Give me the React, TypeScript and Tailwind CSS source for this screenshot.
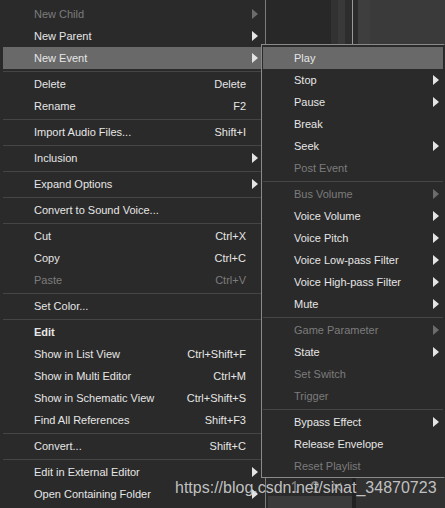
import React from "react";

type Item = {
  label: string;
  shortcut?: string;
  arrow?: boolean;
  disabled?: boolean;
  active?: boolean;
  bold?: boolean;
};

type Entry = Item | "sep";

const mainItems: Entry[] = [
  { label: "New Child", arrow: true, disabled: true },
  { label: "New Parent", arrow: true },
  { label: "New Event", arrow: true, active: true },
  "sep",
  { label: "Delete", shortcut: "Delete" },
  { label: "Rename", shortcut: "F2" },
  "sep",
  { label: "Import Audio Files...", shortcut: "Shift+I" },
  "sep",
  { label: "Inclusion", arrow: true },
  "sep",
  { label: "Expand Options", arrow: true },
  "sep",
  { label: "Convert to Sound Voice..." },
  "sep",
  { label: "Cut", shortcut: "Ctrl+X" },
  { label: "Copy", shortcut: "Ctrl+C" },
  { label: "Paste", shortcut: "Ctrl+V", disabled: true },
  "sep",
  { label: "Set Color..." },
  "sep",
  { label: "Edit", bold: true },
  { label: "Show in List View", shortcut: "Ctrl+Shift+F" },
  { label: "Show in Multi Editor", shortcut: "Ctrl+M" },
  { label: "Show in Schematic View", shortcut: "Ctrl+Shift+S" },
  { label: "Find All References", shortcut: "Shift+F3" },
  "sep",
  { label: "Convert...", shortcut: "Shift+C" },
  "sep",
  { label: "Edit in External Editor", arrow: true },
  { label: "Open Containing Folder", arrow: true },
];

const eventItems: Entry[] = [
  { label: "Play", active: true },
  { label: "Stop", arrow: true },
  { label: "Pause", arrow: true },
  { label: "Break" },
  { label: "Seek", arrow: true },
  { label: "Post Event", disabled: true },
  "sep",
  { label: "Bus Volume", arrow: true, disabled: true },
  { label: "Voice Volume", arrow: true },
  { label: "Voice Pitch", arrow: true },
  { label: "Voice Low-pass Filter", arrow: true },
  { label: "Voice High-pass Filter", arrow: true },
  { label: "Mute", arrow: true },
  "sep",
  { label: "Game Parameter", arrow: true, disabled: true },
  { label: "State", arrow: true },
  { label: "Set Switch", disabled: true },
  { label: "Trigger", disabled: true },
  "sep",
  { label: "Bypass Effect", arrow: true },
  { label: "Release Envelope" },
  { label: "Reset Playlist", disabled: true },
];

function Arrow({ disabled }: { disabled?: boolean }) {
  return (
    <span
      className={`block w-0 h-0 border-y-[5px] border-y-transparent border-l-[6px] ${
        disabled ? "border-l-[#6c6c6c]" : "border-l-[#e4e4e4]"
      }`}
    />
  );
}

function Separator() {
  return (
    <div className="h-[4px] flex items-center">
      <div className="h-px w-full bg-[#454545]" />
    </div>
  );
}

function Row({ item, slot }: { item: Item; slot: string }) {
  return (
    <div
      className={`h-[22px] flex items-center pl-[31px] ${
        item.active ? "bg-[#696969]" : ""
      } ${item.disabled ? "text-[#7c7c7c]" : "text-[#e6e6e6]"} ${
        item.bold ? "font-bold" : ""
      }`}
    >
      <span className="flex-1 whitespace-nowrap">{item.label}</span>
      {item.shortcut && <span className="whitespace-nowrap">{item.shortcut}</span>}
      <span className={`${slot} flex items-center`}>
        {item.arrow && <Arrow disabled={item.disabled} />}
      </span>
    </div>
  );
}

function MenuList({ items, slot }: { items: Entry[]; slot: string }) {
  return (
    <>
      {items.map((it, i) =>
        it === "sep" ? <Separator key={i} /> : <Row key={i} item={it} slot={slot} />
      )}
    </>
  );
}

// small dim toolbar icons of the panel behind the menus
function PanelIcons() {
  return (
    <div className="h-[18px] flex items-center gap-[12px] pl-[24px]">
      <svg width="8" height="12" viewBox="0 0 8 12" fill="none" stroke="#7a7a7a" strokeWidth="1.6">
        <path d="M2 3l3-2v10M2 11h6" />
      </svg>
      <svg width="10" height="12" viewBox="0 0 10 12" fill="none" stroke="#7a7a7a" strokeWidth="1.8">
        <path d="M2 4a3 3 0 1 1 4 2.8c-1 .4-1 1-1 2.2" />
        <circle cx="5" cy="11" r=".6" fill="#7a7a7a" />
      </svg>
      <svg width="10" height="10" viewBox="0 0 10 10" fill="none" stroke="#7a7a7a" strokeWidth="1.4">
        <path d="M1 1l8 8M9 1l-8 8" />
      </svg>
    </div>
  );
}

export default function App() {
  return (
    <div className="relative w-[445px] h-[508px] overflow-hidden bg-[#2a2a2a] font-['Liberation_Sans',Arial,sans-serif] text-[11px]">
      <div className="flex h-full">
        {/* main context menu */}
        <div className="w-[266px] shrink-0 h-full bg-[#2a2a2a] border-r border-[#7c7c7c] pl-[3px] pt-[3px]">
          <MenuList items={mainItems} slot="w-[19px] pl-[6px]" />
        </div>

        {/* editor panels behind the menus */}
        <div className="flex-1 flex flex-col">
          <div className="h-[478px] flex">
            <div className="w-[65px] bg-[#282828]" />
            <div className="w-[7px] bg-[#323232]" />
            <div className="w-[7px] bg-[#393939]" />
            <div className="w-[7px] bg-[#2d2d2d]" />
            <div className="w-px bg-[#9a9a9a]" />
            <div className="w-[5px] bg-[#2c2c2c]" />
            <div className="w-[12px] bg-[#3e3e3e]" />
            <div className="flex-1 bg-[#3a3a3a]" />
          </div>
          <div className="flex-1 flex">
            <div className="w-[86px] flex flex-col">
              <PanelIcons />
              <div className="flex-1 ml-[2px] bg-[#3b3b3b]" />
            </div>
            <div className="w-[4px] bg-[#222222]" />
            <div className="flex-1 bg-[#313131]" />
          </div>
        </div>
      </div>

      {/* New Event submenu */}
      <div className="absolute left-[261px] top-[44px] w-[184px] bg-[#2a2a2a] border-l border-t border-b border-[#8a8a8a] border-r-[#2a2a2a] border-r pl-px pr-px pt-[2px]">
        <MenuList items={eventItems} slot="w-[10px]" />
      </div>

      {/* watermark */}
      <div className="absolute left-[175px] top-[478px] text-[16px] leading-[20px] text-[#d4d4d4]/90 whitespace-nowrap">
        https://blog.csdn.net/sinat_34870723
      </div>
    </div>
  );
}
